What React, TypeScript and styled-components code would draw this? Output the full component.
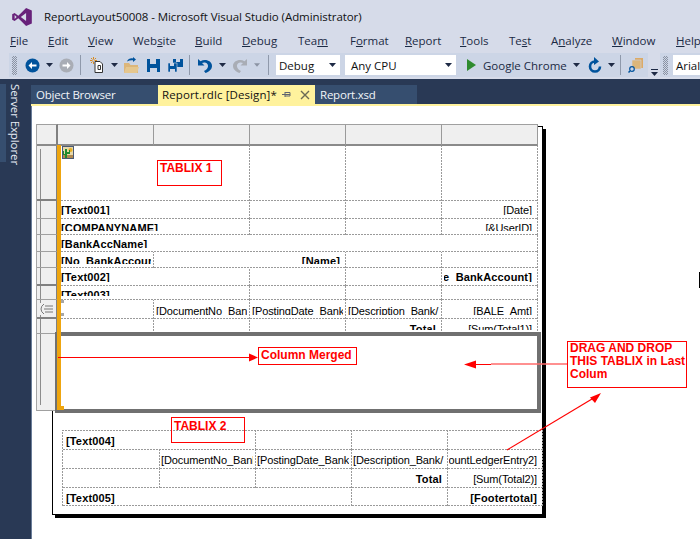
import React from "react";
import styled, { createGlobalStyle, css } from "styled-components";

const GlobalStyle = createGlobalStyle`
  html, body { margin: 0; padding: 0; background: #d6dbe9; }
  * { box-sizing: border-box; }
`;

const dashH = "repeating-linear-gradient(90deg, #9a9a9a 0 2px, transparent 2px 3px)";
const dashV = "repeating-linear-gradient(0deg, #9a9a9a 0 2px, transparent 2px 3px)";

const Shell = styled.div`
  position: relative;
  width: 700px;
  height: 539px;
  overflow: hidden;
  display: flex;
  flex-direction: column;
  background: #d6dbe9;
  font-family: "Open Sans", "Noto Sans", sans-serif;
  color: #1b2a44;
`;

const TitleBar = styled.div`
  height: 30px;
  display: flex;
  align-items: center;
  padding: 3px 0 0 12px;
  gap: 12px;
  font-size: 11.5px;
  letter-spacing: -0.07px;
  color: #111;
`;

const MenuBar = styled.div`
  height: 23px;
  display: flex;
  align-items: center;
  padding: 0 0 2px 10px;
  font-size: 11.5px;
  white-space: nowrap;
`;

const MenuItem = styled.span<{ $w: number }>`
  width: ${(p) => p.$w}px;
  flex: none;
`;

const ToolRow = styled.div`
  height: 26px;
  display: flex;
  padding: 0 0 2px 9px;
`;

const Band = styled.div<{ $w: number }>`
  width: ${(p) => p.$w}px;
  flex: none;
  display: flex;
  align-items: center;
  background: #ccd5e6;
`;

const Overflow = styled.div`
  width: 12px;
  flex: none;
  display: flex;
  align-items: flex-end;
  justify-content: center;
  padding-bottom: 1px;
`;

const Grip = styled.div`
  width: 5px;
  height: 19px;
  flex: none;
  margin: 0 6px 0 3px;
  background: repeating-conic-gradient(#8a92a2 0 25%, transparent 0 50%) 0 0 / 2px 2px;
`;

const Slot = styled.div<{ $w: number }>`
  width: ${(p) => p.$w}px;
  flex: none;
  display: flex;
  justify-content: center;
  align-items: center;
`;

const Divider = styled.div`
  width: 1px;
  height: 20px;
  background: #8f99ab;
`;

const Combo = styled.div<{ $w: number; $ml?: number; $pl?: number }>`
  width: ${(p) => p.$w}px;
  margin-left: ${(p) => p.$ml ?? 0}px;
  height: 20px;
  flex: none;
  display: flex;
  align-items: center;
  justify-content: space-between;
  padding: 0 4px 0 ${(p) => p.$pl ?? 3}px;
  background: #fff;
  font-size: 11.5px;
  color: #111;
  white-space: nowrap;
  overflow: hidden;
`;

const PlayButton = styled.svg`
  flex: none;
  margin: 0 7px 0 11px;
`;

const TargetLabel = styled.span`
  width: 84px;
  flex: none;
  font-size: 11.5px;
  white-space: nowrap;
`;

const Workspace = styled.div`
  flex: 1;
  min-height: 0;
  display: flex;
  background: #293955;
`;

const Rail = styled.div`
  width: 31px;
  flex: none;
  display: flex;
  align-items: flex-start;
  padding-top: 5px;
  gap: 3px;
`;

const RailAccent = styled.div`
  width: 6px;
  height: 78px;
  background: #364e6f;
`;

const RailLabel = styled.span`
  writing-mode: vertical-rl;
  font-size: 11.5px;
  line-height: 12px;
  letter-spacing: -0.1px;
  color: #e8edf5;
  white-space: nowrap;
`;

const MainColumn = styled.div`
  flex: 1;
  min-width: 0;
  display: flex;
  flex-direction: column;
`;

const TabStrip = styled.div`
  height: 27px;
  flex: none;
  display: flex;
  padding-top: 6px;
  border-bottom: 2px solid #fff29d;
`;

const Tab = styled.div<{ $w: number; $active?: boolean }>`
  width: ${(p) => p.$w}px;
  height: 19px;
  flex: none;
  display: flex;
  align-items: center;
  padding-left: ${(p) => (p.$active ? 4 : 5)}px;
  font-size: 11.5px;
  letter-spacing: ${(p) => (p.$active ? "0.1px" : "-0.22px")};
  white-space: nowrap;
  background: ${(p) => (p.$active ? "#fff29d" : "#364e6f")};
  color: ${(p) => (p.$active ? "#111" : "#f1f4f8")};
`;

const TabTitle = styled.span`
  width: 118px;
  flex: none;
`;

const TabAction = styled.span<{ $w: number }>`
  width: ${(p) => p.$w}px;
  flex: none;
  display: flex;
  justify-content: center;
`;

const Document = styled.div`
  flex: 1;
  min-height: 0;
  padding: 20px 0 0 20px;
  background: #fff;
  border-left: 1px solid #6a7d99;
`;

const Page = styled.div`
  width: 491px;
  height: 389px;
  background: #fff;
  border: 1px solid #000;
  box-shadow: 3px 3px 0 #000;
`;

const TablixGrid = styled.div`
  position: relative;
  width: 502px;
  margin: -3px 0 0 -17px;
  display: grid;
  grid-template-columns: 21px repeat(5, 96px);
  grid-template-rows: 22px 55px 18px 16px 17px 16px 18px 14px 19px 15px 77px;
  border-left: 1px solid #a6a6a6;
`;

const HeaderCell = styled.div<{ $corner?: boolean }>`
  background: #efefef;
  border-top: 1px solid #a0a0a0;
  border-right: ${(p) => (p.$corner ? "2px solid #808080" : "1px solid #9a9a9a")};
  border-bottom: 2px solid #8a8a8a;
`;

const RowHandle = styled.div<{ $first?: boolean; $last?: boolean; $strong?: boolean }>`
  position: relative;
  background: #efefef;
  border-right: 2px solid #808080;
  border-bottom: ${(p) => (p.$strong ? "2px solid #808080" : "1px solid #a0a0a0")};

  &::before {
    content: "";
    position: absolute;
    left: 3px;
    top: ${(p) => (p.$first ? 3 : 0)}px;
    bottom: ${(p) => (p.$last ? 5 : 0)}px;
    width: 1px;
    background: #8c8c8c;
  }
`;

const DetailIcon = styled.svg`
  position: absolute;
  left: 3px;
  top: 3px;
  background: #efefef;
`;

const dashedEdges = css`
  border-right: 1px solid transparent;
  border-bottom: 1px solid transparent;
  background-image: ${dashH}, ${dashV};
  background-size: 100% 1px, 1px 100%;
  background-position: left bottom, right top;
  background-repeat: no-repeat;
  background-origin: border-box;
  background-clip: border-box;
`;

const Cell = styled.div<{ $span?: number; $right?: boolean; $bold?: boolean; $pad?: number; $top?: number }>`
  grid-column: span ${(p) => p.$span ?? 1};
  min-width: 0;
  min-height: 0;
  padding: ${(p) => p.$top ?? 3}px ${(p) => (p.$right ? 5 : 2)}px 3px ${(p) => p.$pad ?? 2}px;
  ${dashedEdges}
  font-family: "Liberation Sans", Arial, sans-serif;
  font-size: 11px;
  line-height: 13px;
  color: #000;
  font-weight: ${(p) => (p.$bold ? 700 : 400)};
  letter-spacing: ${(p) => (p.$bold ? "0.15px" : "-0.12px")};
`;

const InnerCell = styled(Cell)`
  && {
    padding-top: 4px;
    padding-bottom: 0;
  }
`;

const CellText = styled.div<{ $right?: boolean }>`
  height: 100%;
  display: flex;
  justify-content: ${(p) => (p.$right ? "flex-end" : "flex-start")};
  overflow: hidden;
  white-space: nowrap;
`;

const PicturePlaceholder = styled.svg`
  display: block;
  margin: -3px 0 0 1px;
`;

const MergedCell = styled.div`
  grid-column: span 5;
  position: relative;
`;

const SelectionFrame = styled.div`
  position: absolute;
  left: -3px;
  right: -3px;
  top: -2px;
  bottom: -2px;
  border: 4px solid #707070;
`;

const GroupBar = styled.div`
  position: absolute;
  left: 20px;
  top: 21px;
  bottom: 1px;
  width: 4px;
  background: #eea50f;
`;

const BarNotch = styled.div<{ $top: number; $grey?: boolean }>`
  position: absolute;
  left: 24px;
  top: ${(p) => p.$top}px;
  width: 3px;
  height: ${(p) => (p.$grey ? 3 : 4)}px;
  background: ${(p) => (p.$grey ? "#a6a6a6" : "#eea50f")};
`;

const InnerTablix = styled.div`
  width: 481px;
  margin: 19px 0 0 9px;
  padding: 1px 0 0 1px;
  display: grid;
  grid-template-columns: 97px 96px 96px 96px 95px;
  grid-template-rows: 19px 19px 19px 18px;
  background-image: ${dashH}, ${dashV};
  background-size: 100% 1px, 1px 100%;
  background-position: left top, left top;
  background-repeat: no-repeat;
`;

const Callout = styled.div<{ $x: number; $y: number; $w: number; $h: number; $top?: number }>`
  position: absolute;
  left: ${(p) => p.$x}px;
  top: ${(p) => p.$y}px;
  width: ${(p) => p.$w}px;
  height: ${(p) => p.$h}px;
  padding: ${(p) => p.$top ?? 1}px 0 0 2px;
  border: 1px solid #f00;
  font-family: "Liberation Sans", Arial, sans-serif;
  font-size: 12px;
  line-height: 13px;
  font-weight: 700;
  color: #f00;
`;

const ArrowLayer = styled.svg`
  position: absolute;
  left: 0;
  top: 0;
  pointer-events: none;
`;

const EdgeTick = styled.div`
  position: absolute;
  left: 699px;
  top: 272px;
  width: 1px;
  height: 16px;
  background: #000;
`;

const Caret = ({ grey }: { grey?: boolean }) => (
  <svg width="7" height="4" viewBox="0 0 7 4">
    <path d="M0 0h7L3.5 4z" fill={grey ? "#8b93a3" : "#1e2a45"} />
  </svg>
);

const CircleArrow = ({ fill, flip }: { fill: string; flip?: boolean }) => (
  <svg width="15" height="15" viewBox="0 0 15 15">
    <circle cx="7.5" cy="7.5" r="7" fill={fill} />
    <g transform={flip ? "rotate(180 7.5 7.5)" : undefined}>
      <path d="M3.5 7.5 7 4v2.5h4.5v2H7V11z" fill="#fff" />
    </g>
  </svg>
);

const NewItemIcon = () => (
  <svg width="14" height="16" viewBox="0 0 14 16">
    <path d="M5 4.5h5l2.500 2.500v8.500H5z" fill="#fff" stroke="#333" />
    <path d="M8 8.500h2.500v4H8z" fill="none" stroke="#333" />
    <path d="M3.500 0v2.500M3.500 4.500V7M0 3.500h2.500M4.500 3.500H7M1 1l1.500 1.500M6 1 4.500 2.500M1 6l1.500-1.500" stroke="#d98a1e" />
  </svg>
);

const OpenIcon = () => (
  <svg width="15" height="17" viewBox="0 0 15 17">
    <path d="M0 6h5l1.500 2H14v8H0z" fill="#dcb67a" />
    <path d="M0 16l2-6h13l-2 6z" fill="#e5c78f" />
    <path d="M3 4.500c1-3 4-3.500 6-3V0l3 2.500-3 2.500V3.300C7 3 5 3.500 3 4.500z" fill="#00539c" />
  </svg>
);

const SaveIcon = () => (
  <svg width="13" height="13" viewBox="0 0 13 13">
    <path d="M0 0h13v13H0z" fill="#00539c" />
    <path d="M3 0h6v5H3z" fill="#ccd5e6" />
    <path d="M3 9h7v4H3z" fill="#ccd5e6" />
  </svg>
);

const SaveAllIcon = () => (
  <svg width="15" height="13" viewBox="0 0 15 13">
    <path d="M5 0h10v8H5z" fill="#00539c" />
    <path d="M8 0h4v3H8z" fill="#ccd5e6" />
    <path d="M0 4h9v9H0z" fill="#00539c" stroke="#ccd5e6" strokeWidth="0.6" />
    <path d="M2 4h4v3H2zM2 10h5v3H2z" fill="#ccd5e6" />
  </svg>
);

const UndoIcon = ({ fill, flip }: { fill: string; flip?: boolean }) => (
  <svg width="14" height="15" viewBox="0 0 14 15">
    <g transform={flip ? "translate(14 0) scale(-1 1)" : undefined}>
      <path d="M0 1v6.500h6.500L4 5c2.500-1.500 6.500 0 6 3.500-.3 2-2 3.500-4 4.500l1.500 2c4-1.500 6.500-4 6.500-7C14 3 7.500.5 2.500 3.200z" fill={fill} />
    </g>
  </svg>
);

const RefreshIcon = () => (
  <svg width="14" height="16" viewBox="0 0 14 16">
    <path d="M7 4.500a5 5 0 1 0 5 5" fill="none" stroke="#00539c" strokeWidth="2.600" />
    <path d="M6 0l5 4.500L6 8z" fill="#00539c" />
  </svg>
);

const FindIcon = () => (
  <svg width="15" height="15" viewBox="0 0 15 15">
    <path d="M7 0h8v10H7z" fill="#dcaa66" />
    <path d="M4 2h9v9H4z" fill="#dcb67a" stroke="#ccd5e6" strokeWidth="0.6" />
    <circle cx="4" cy="11" r="2.300" fill="#ccd5e6" stroke="#00539c" strokeWidth="1.200" />
    <path d="M2.200 12.800 0.500 14.500" stroke="#00539c" strokeWidth="1.500" />
  </svg>
);

const menu: [string, string, string, number][] = [
  ["", "F", "ile", 38],
  ["", "E", "dit", 40],
  ["", "V", "iew", 45],
  ["Web", "s", "ite", 62],
  ["", "B", "uild", 47],
  ["", "D", "ebug", 56],
  ["Tea", "m", "", 52],
  ["F", "o", "rmat", 55],
  ["", "R", "eport", 55],
  ["", "T", "ools", 49],
  ["Te", "s", "t", 42],
  ["A", "n", "alyze", 61],
  ["", "W", "indow", 64],
  ["", "H", "elp", 30],
];

export default function App() {
  return (
    <Shell>
      <GlobalStyle />
      <TitleBar>
        <svg width="20" height="18" viewBox="0 0 24 22">
          <path
            fillRule="evenodd"
            fill="#68217a"
            d="M17 0 7.500 9.500 3 6 0 7.500v7L3 16l4.500-3.500L17 22l7-3V3zM17 6v10l-6.500-5zM3 8.500 5.500 11 3 13.500z"
          />
        </svg>
        ReportLayout50008 - Microsoft Visual Studio (Administrator)
      </TitleBar>
      <MenuBar>
        {menu.map(([a, key, b, w]) => (
          <MenuItem key={a + key + b} $w={w}>
            {a}
            <u>{key}</u>
            {b}
          </MenuItem>
        ))}
      </MenuBar>
      <ToolRow>
        <Band $w={639}>
          <Grip />
          <Slot $w={18}><CircleArrow fill="#00539c" /></Slot>
          <Slot $w={16}><Caret /></Slot>
          <Slot $w={18}><CircleArrow fill="#a9adb5" flip /></Slot>
          <Slot $w={10}><Divider /></Slot>
          <Slot $w={24}><NewItemIcon /></Slot>
          <Slot $w={10}><Caret /></Slot>
          <Slot $w={24}><OpenIcon /></Slot>
          <Slot $w={20}><SaveIcon /></Slot>
          <Slot $w={24}><SaveAllIcon /></Slot>
          <Slot $w={4}><Divider /></Slot>
          <Slot $w={27}><UndoIcon fill="#00539c" /></Slot>
          <Slot $w={8}><Caret /></Slot>
          <Slot $w={28}><UndoIcon fill="#a9adb5" flip /></Slot>
          <Slot $w={6}><Caret grey /></Slot>
          <Slot $w={16}><Divider /></Slot>
          <Combo $w={64}>Debug<Caret /></Combo>
          <Combo $w={111} $ml={5} $pl={6}>Any CPU<Caret /></Combo>
          <PlayButton width="9" height="12" viewBox="0 0 9 12"><path d="M0 0l9 6-9 6z" fill="#2e8b2e" /></PlayButton>
          <TargetLabel>Google Chrome</TargetLabel>
          <Slot $w={18}><Caret /></Slot>
          <Slot $w={19}><RefreshIcon /></Slot>
          <Slot $w={14}><Caret /></Slot>
          <Slot $w={4}><Divider /></Slot>
          <Slot $w={26}><FindIcon /></Slot>
        </Band>
        <Overflow>
          <svg width="7" height="7" viewBox="0 0 7 7"><path d="M0 0h7v1H0zM0 3h7L3.500 7z" fill="#1e2a45" /></svg>
        </Overflow>
        <Band $w={40}>
          <Grip />
          <Combo $w={40} $ml={-1}>Arial</Combo>
        </Band>
      </ToolRow>
      <Workspace>
        <Rail>
          <RailAccent />
          <RailLabel>Server Explorer</RailLabel>
        </Rail>
        <MainColumn>
          <TabStrip>
            <Tab $w={127}>Object Browser</Tab>
            <Tab $w={157} $active>
              <TabTitle>Report.rdlc [Design]*</TabTitle>
              <TabAction $w={13}>
                <svg width="9" height="7" viewBox="0 0 9 7"><path d="M0 3.500h3M3 1v5M3 1.500h5v3.500H3M3 3.500h5" fill="none" stroke="#5f6470" /></svg>
              </TabAction>
              <TabAction $w={24}>
                <svg width="10" height="10" viewBox="0 0 10 10"><path d="M1 1l8 8M9 1 1 9" stroke="#6b6a55" strokeWidth="1.400" /></svg>
              </TabAction>
            </Tab>
            <Tab $w={102}>Report.xsd</Tab>
          </TabStrip>
          <Document>
            <Page>
              <TablixGrid>
                <HeaderCell $corner />
                <HeaderCell />
                <HeaderCell />
                <HeaderCell />
                <HeaderCell />
                <HeaderCell />

                <RowHandle $first $strong />
                <Cell $span={2} $pad={3}>
                  <PicturePlaceholder width="12" height="13" viewBox="0 0 12 13">
                    <path d="M0 0h12v13H0z" fill="#4a5a75" />
                    <path d="M1 1h10v11H1z" fill="#e8d8a8" />
                    <circle cx="8.500" cy="4" r="2" fill="#e8b020" />
                    <path d="M1 9h10v3H1z" fill="#b08850" />
                    <path d="M3 3h2v9H3zM1 5h1v3h1v1H1zM5 6h2V4h1v4H5z" fill="#1f8a2e" />
                  </PicturePlaceholder>
                </Cell>
                <Cell />
                <Cell />
                <Cell />

                <RowHandle />
                <Cell $span={2} $bold $pad={3}><CellText>[Text001]</CellText></Cell>
                <Cell />
                <Cell />
                <Cell $right><CellText $right>[Date]</CellText></Cell>

                <RowHandle />
                <Cell $span={2} $bold $pad={3}><CellText>[COMPANYNAME]</CellText></Cell>
                <Cell />
                <Cell />
                <Cell $right><CellText $right>[&amp;UserID]</CellText></Cell>

                <RowHandle />
                <Cell $span={5} $bold $pad={3}><CellText>[BankAccName]</CellText></Cell>

                <RowHandle />
                <Cell $bold $pad={3}><CellText>[No_BankAccoun</CellText></Cell>
                <Cell $span={2} $bold $right><CellText $right>[Name]</CellText></Cell>
                <Cell />
                <Cell />

                <RowHandle $strong />
                <Cell $span={2} $bold $pad={3}><CellText>[Text002]</CellText></Cell>
                <Cell />
                <Cell />
                <Cell $bold $right><CellText $right>e_BankAccount]</CellText></Cell>

                <RowHandle />
                <Cell $span={2} $bold $pad={3}><CellText>[Text003]</CellText></Cell>
                <Cell />
                <Cell />
                <Cell />

                <RowHandle $strong>
                  <DetailIcon width="14" height="12" viewBox="0 0 14 12">
                    <path d="M4 1Q1 3 1 6T4 11M5 3h8M4 6h9M5 9h8" fill="none" stroke="#777" />
                  </DetailIcon>
                </RowHandle>
                <Cell />
                <Cell $top={5}><CellText>[DocumentNo_Banl</CellText></Cell>
                <Cell $top={5}><CellText>[PostingDate_Bank</CellText></Cell>
                <Cell $top={5}><CellText>[Description_Bank/</CellText></Cell>
                <Cell $right $top={5}><CellText $right>[BALE_Amt]</CellText></Cell>

                <RowHandle />
                <Cell />
                <Cell />
                <Cell />
                <Cell $bold $right $top={4}><CellText $right>Total</CellText></Cell>
                <Cell $right $top={4}><CellText $right>[Sum(Total1)]</CellText></Cell>

                <RowHandle $last />
                <MergedCell>
                  <SelectionFrame />
                </MergedCell>

                <GroupBar />
                <BarNotch $top={176} $grey />
                <BarNotch $top={189} $grey />
                <BarNotch $top={282} />
              </TablixGrid>

              <InnerTablix>
                <InnerCell $span={2} $bold $pad={3}><CellText>[Text004]</CellText></InnerCell>
                <InnerCell />
                <InnerCell />
                <InnerCell />

                <InnerCell />
                <InnerCell $pad={1}><CellText>[DocumentNo_Banl</CellText></InnerCell>
                <InnerCell $pad={1}><CellText>[PostingDate_Bank.</CellText></InnerCell>
                <InnerCell $pad={1}><CellText>[Description_Bank/</CellText></InnerCell>
                <InnerCell $right $pad={1}><CellText $right>ountLedgerEntry2]</CellText></InnerCell>

                <InnerCell />
                <InnerCell />
                <InnerCell />
                <InnerCell $bold $right><CellText $right>Total</CellText></InnerCell>
                <InnerCell $right><CellText $right>[Sum(Total2)]</CellText></InnerCell>

                <InnerCell $span={3} $bold $pad={3}><CellText>[Text005]</CellText></InnerCell>
                <InnerCell />
                <InnerCell $bold $right><CellText $right>[Footertotal]</CellText></InnerCell>
              </InnerTablix>
            </Page>
          </Document>
        </MainColumn>
      </Workspace>

      <Callout $x={157} $y={160} $w={65} $h={26}>TABLIX 1</Callout>
      <Callout $x={171} $y={417} $w={74} $h={26} $top={2}>TABLIX 2</Callout>
      <Callout $x={258} $y={347} $w={99} $h={18}>Column Merged</Callout>
      <Callout $x={567} $y={341} $w={120} $h={47} $top={0}>
        DRAG AND DROP
        <br />
        THIS TABLIX in Last
        <br />
        Colum
      </Callout>

      <ArrowLayer width="700" height="539" viewBox="0 0 700 539">
        <path d="M58 357.500H250" stroke="#f00" />
        <path d="M258 357.500 249 353.500v8z" fill="#f00" />
        <path d="M476 364.500H491" stroke="#f00" />
        <path d="M491 364H567" stroke="#ff6b6b" strokeWidth="1.500" />
        <path d="M464 364.500 476 360.500v8z" fill="#f00" />
        <path d="M507 450 592 399" stroke="#f00" strokeWidth="1.200" />
        <path d="M601 393 590 397.500 595 403z" fill="#f00" />
      </ArrowLayer>
      <EdgeTick />
    </Shell>
  );
}
